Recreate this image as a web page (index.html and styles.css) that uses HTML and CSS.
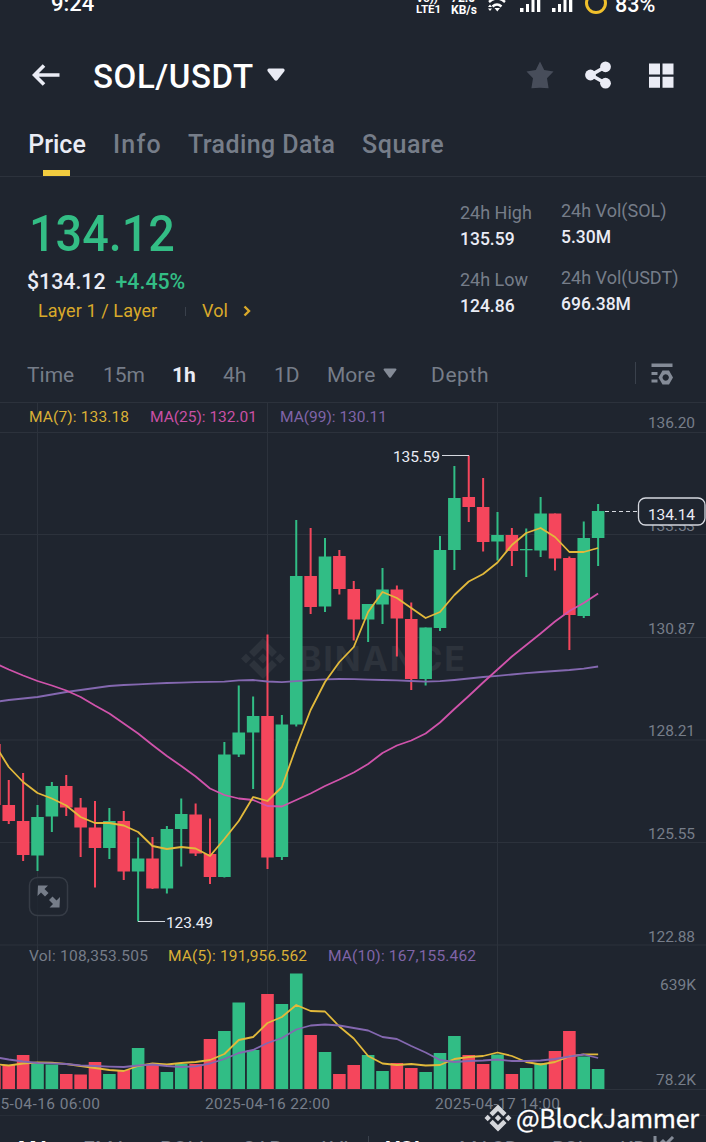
FILE: index.html
```html
<!DOCTYPE html>
<html lang="en">
  <head>
    <meta charset="utf-8">
    <title>SOL/USDT</title>
    <link rel="stylesheet" href="styles.css">
  </head>
  <body>
    <div class="status">
      <span class="clock">9:24</span>
      <span class="net vo"><b>Vo))</b><b>LTE1</b></span>
      <span class="net speed"><b>72.0</b><b>KB/s</b></span>
      <svg class="wifi" width="20" height="22" viewBox="0 0 20 22">
        <path d="M2 7Q10 0 18 7M5.500 11.500Q10 7.500 14.500 11.500" fill="none" stroke="#fff" stroke-width="2.4" />
        <path d="M7.5 13h5.500l-2.700 3.400zM3 9.500l2 2.500H1zM1 13.500h4l-2 2.500z" fill="#fff" />
      </svg>
      <svg class="signal" width="21" height="22" viewBox="0 0 21 22">
        <path d="M0 13h3.500v4H0zM6 9h3v8H6zM11.500 5h3v12h-3zM17 0h3.300v17H17z" fill="#fff" />
      </svg>
      <svg class="signal" width="21" height="22" viewBox="0 0 21 22">
        <path d="M0 13h3.500v4H0zM6 9h3v8H6zM11.500 5h3v12h-3zM17 0h3.300v17H17z" fill="#fff" />
      </svg>
      <span class="ring"></span>
      <span class="battery">83%</span>
    </div>

    <header>
      <svg class="back" width="28" height="22" viewBox="0 0 28 22">
        <path d="M12 1.500L2.500 11l9.500 9.500M3 11h24.500" fill="none" stroke="#eaecf5" stroke-width="3.600" />
      </svg>
      <h1>SOL/USDT</h1>
      <svg class="caret" width="18" height="14" viewBox="0 0 18 14">
        <path d="M2 0.500h14q2 0 1.500 2.500L10.500 12q-1.500 1.500-3 0L0.500 3Q0 0.500 2 0.500z" fill="#eaecf5" />
      </svg>
      <svg class="star" width="28" height="28" viewBox="0 0 28 28">
        <path d="M14 0.500l4.200 8.600 9.300 1.400-6.500 6.800 1.600 9.900-8.600-0.500-8.600 0.500L7 17.300 0.500 10.500l9.300-1.400z" fill="#474d5a" />
      </svg>
      <svg class="share" width="27" height="28" viewBox="0 0 27 28">
        <path d="M20.500 5.800L6 14l14.500 8.200" fill="none" stroke="#eaecf5" stroke-width="3.600" />
        <circle cx="20.500" cy="5.800" r="5.400" fill="#eaecf5" />
        <circle cx="5.500" cy="14" r="5.400" fill="#eaecf5" />
        <circle cx="20.500" cy="22.200" r="5.400" fill="#eaecf5" />
      </svg>
      <svg class="apps" width="25" height="25" viewBox="0 0 25 25">
        <path d="M0 0.500h11v11H0zM13.500 0.500h11v11h-11zM0 13.800h11v11H0zM13.500 13.800h11v11h-11z" fill="#eaecf5" />
      </svg>
    </header>

    <nav class="tabs">
      <span class="tab active">Price</span>
      <span class="tab info">Info</span>
      <span class="tab trading">Trading Data</span>
      <span class="tab square">Square</span>
    </nav>

    <section class="summary">
      <div class="left">
        <div class="price">134.12</div>
        <div class="fiat"><span>$134.12</span><span class="up">+4.45%</span></div>
        <div class="tags">
          <span class="layer">Layer 1 / Layer</span>
          <i></i>
          <span class="vol">Vol</span>
          <svg width="8" height="12" viewBox="0 0 8 12">
            <path d="M1.500 1.500L6 6l-4.500 4.500" fill="none" stroke="#d9a92a" stroke-width="2.400" />
          </svg>
        </div>
      </div>
      <div class="stats high">
        <label>24h High</label><strong>135.59</strong>
        <label>24h Low</label><strong>124.86</strong>
      </div>
      <div class="stats">
        <label>24h Vol(SOL)</label><strong>5.30M</strong>
        <label>24h Vol(USDT)</label><strong>696.38M</strong>
      </div>
    </section>

    <nav class="intervals">
      <span>Time</span>
      <span>15m</span>
      <span class="active">1h</span>
      <span>4h</span>
      <span>1D</span>
      <span class="more">More
        <svg width="14" height="11" viewBox="0 0 14 11">
          <path d="M1.500 0.500h11q1.500 0 0.800 1.500L8 9.300q-1 1-2 0L0.700 2Q0 0.500 1.500 0.500z" fill="#848b97" />
        </svg>
      </span>
      <span class="depth">Depth</span>
      <i></i>
      <svg class="settings" width="22" height="22" viewBox="0 0 22 22">
        <path d="M0.500 0.500h21v3.500h-21zM0.500 9h6v3h-6zM0.500 16.500h6v3h-6z" fill="#848b97" />
        <path d="M11.500 7.500h6.500l4 7-4 7h-6.500l-4-7zM14.700 11.300a3.200 3.200 0 1 0 0.010 0z" fill="#848b97" fill-rule="evenodd" />
      </svg>
    </nav>

    <svg id="chart" width="706" height="713" viewBox="0 402 706 713"></svg>

    <nav class="indicators">
      <span class="on">MA</span>
      <span>EMA</span>
      <span>BOLL</span>
      <span>SAR</span>
      <span>AVL</span>
      <i></i>
      <span class="on">VOL</span>
      <span>MACD</span>
      <span>RSI</span>
      <span>KDJ</span>
      <svg width="22" height="20" viewBox="0 0 22 20">
        <path d="M2 0v18h18M6 9l4-4 3 3 7-7" fill="none" stroke="#848b97" stroke-width="3" />
      </svg>
    </nav>

    <div class="credit">
      <svg width="28" height="28" viewBox="0 0 28 28">
        <path d="M14 0.500L22.500 9l-3.200 3.200L14 6.900l-5.300 5.300L5.500 9zM14 27.500L22.500 19l-3.200-3.200L14 21.100l-5.300-5.300L5.500 19zM14 10.800l3.200 3.200-3.200 3.200-3.200-3.200zM3.700 10.800L6.900 14l-3.200 3.200L0.500 14zM24.300 10.800l3.200 3.200-3.200 3.200-3.200-3.200z" />
      </svg>
      <span>@BlockJammer</span>
    </div>

    <script src="chart.js"></script>
  </body>
</html>
```
FILE: styles.css
```css
* {
  box-sizing: border-box;
}

body {
  margin: 0;
  width: 706px;
  height: 1142px;
  overflow: hidden;
  position: relative;
  background-color: #1f252f;
  color: #eaecf5;
  font-family: Roboto, "Liberation Sans", sans-serif;
}

svg {
  display: block;
  flex: none;
}

span {
  white-space: nowrap;
}

/* status bar */
.status {
  display: flex;
  height: 30px;
  padding-left: 51px;
  overflow: hidden;
  color: #fff;
}

.clock {
  width: 365px;
  margin-top: -9px;
  font-size: 22px;
  font-weight: 500;
  line-height: 26px;
}

.net {
  display: flex;
  flex-direction: column;
  font-size: 11.5px;
  line-height: 11px;
}

.net b {
  font-weight: 700;
}

.vo {
  width: 35px;
  margin-top: -7px;
}

.speed {
  width: 36px;
  margin-top: -8px;
  font-size: 12px;
  line-height: 12px;
}

.wifi {
  margin-top: -5px;
  margin-right: 13px;
}

.signal {
  margin-top: -5px;
  margin-right: 11px;
}

.ring {
  width: 22px;
  height: 22px;
  margin: -8px 0 0 1px;
  border: 3.500px solid #f0c02c;
  border-radius: 50%;
}

.battery {
  margin: -8px 0 0 8px;
  font-size: 21.500px;
  font-weight: 500;
  line-height: 26px;
}

/* header */
header {
  display: flex;
  align-items: center;
  height: 92px;
  padding-left: 32px;
}

h1 {
  width: 160px;
  margin: 2px 14px 0 33px;
  font-size: 33px;
  font-weight: 500;
  line-height: 40px;
  letter-spacing: 0.6px;
  color: #fff;
}

.back,
.star,
.share,
.apps {
  margin-top: -2px;
}

.caret {
  margin-top: -2px;
}

.star {
  margin-left: 241px;
  margin-right: 31px;
}

.share {
  margin-right: 37px;
}

/* tabs */
.tabs {
  display: flex;
  height: 55px;
  padding-left: 28px;
  border-bottom: 1px solid #2c323c;
  font-size: 25px;
  line-height: 30px;
  color: #767d89;
}

.tab {
  height: 55px;
  padding-top: 8px;
  font-weight: 500;
  letter-spacing: 0.4px;
}

.tab.active {
  display: flex;
  flex-direction: column;
  align-items: center;
  width: 58px;
  margin-right: 27px;
  letter-spacing: 0;
  color: #eaecf5;
}

.tab.active::after {
  content: "";
  width: 27px;
  height: 6px;
  margin: 10px 0 0 -1px;
  background-color: #f2cc3f;
}

.info {
  width: 75px;
  letter-spacing: 1.2px;
}

.trading {
  width: 174px;
}

.square {
  letter-spacing: 0.6px;
}

/* price summary */
.summary {
  display: flex;
  height: 171px;
  padding-left: 27px;
}

.left {
  width: 433px;
  padding-top: 29px;
}

.price {
  margin-left: 2px;
  font-size: 50px;
  font-weight: 500;
  line-height: 56px;
  color: #33bd85;
  transform: scaleX(0.935);
  transform-origin: left;
}

.fiat {
  display: flex;
  gap: 10px;
  margin-top: 7px;
  font-size: 21.300px;
  font-weight: 500;
  line-height: 26px;
}

.up {
  color: #33bd85;
}

.tags {
  display: flex;
  align-items: center;
  margin: 5px 0 0 11px;
  font-size: 18px;
  line-height: 22px;
  letter-spacing: 0.1px;
  color: #d9a92a;
}

.layer {
  width: 147px;
}

.tags i {
  width: 1px;
  height: 9px;
  margin-right: 16px;
  background-color: #39404b;
}

.vol {
  width: 41px;
}

.stats {
  display: flex;
  flex-direction: column;
  padding-top: 21px;
  font-size: 18px;
}

.stats.high {
  width: 101px;
  padding-top: 23px;
}

.stats label {
  line-height: 26px;
  color: #767d89;
}

.stats strong {
  height: 41px;
  font-size: 17.500px;
  font-weight: 500;
  line-height: 26px;
}

/* interval row */
.intervals {
  display: grid;
  grid-template-columns: 76px 69px 51px 51px 53px 104px 204px 16px 22px;
  align-items: center;
  height: 54px;
  padding: 0 0 1px 27px;
  font-size: 21px;
  line-height: 26px;
  color: #767d89;
}

.intervals .active {
  font-weight: 700;
  color: #eaecf5;
}

.more {
  display: flex;
  align-items: center;
  gap: 8px;
}

.more svg {
  margin-top: -3px;
}

.depth {
  letter-spacing: 0.6px;
}

.intervals i {
  width: 1px;
  height: 22px;
  margin-top: -3px;
  background-color: #3a414c;
}

.settings {
  margin-top: -2px;
}

/* chart */
#chart text {
  font-size: 15.500px;
  fill: #767d89;
}

#chart .watermark {
  font-family: Inter, sans-serif;
  font-size: 34px;
  font-weight: 700;
  fill: #2d333c;
}

#chart .bright {
  fill: #eaecf5;
}

#chart .ma7 {
  fill: #d9b036;
}

#chart .ma25 {
  fill: #c950a5;
}

#chart .ma99 {
  fill: #8064a8;
}

/* indicator row, cut by the bottom edge */
.indicators {
  display: grid;
  grid-template-columns: 65px 77px 83px 74px 51px 18px 73px 93px 68px 33px 22px;
  padding: 20px 0 0 18px;
  height: 50px;
  border-top: 1px solid #272d37;
  font-size: 21px;
  line-height: 27px;
  color: #767d89;
}

.indicators .on {
  font-weight: 700;
  color: #fff;
}

.indicators i {
  width: 1px;
  background-color: #3a414c;
}

.credit {
  position: absolute;
  left: 484px;
  top: 1100px;
  display: flex;
  align-items: center;
  gap: 4px;
  font-family: "Noto Sans CJK SC", "Noto Sans", sans-serif;
  font-size: 25px;
  line-height: 36px;
  color: #fff;
}

.credit span {
  margin-top: -1px;
  letter-spacing: -0.3px;
  -webkit-text-stroke: 0.3px #fff;
}

.credit svg {
  fill: #d4d6da;
}
```
FILE: chart.js
```javascript
const UP = "#31bd85";
const DOWN = "#f5465c";
const GRID = "#2c323c";
const STEP = 14.375;
const BASE = 1089;

// [direction, body top, body bottom, wick top, wick bottom, volume top]
const candles = [
  [-1, 744, 805, 744, 805, 1066],
  [-1, 805, 821, 780, 824, 1065],
  [-1, 821, 855, 773, 861, 1055],
  [1, 817, 855.5, 805, 871, 1063.5],
  [1, 786, 816.5, 782, 832, 1064.5],
  [-1, 786, 807.5, 775, 816, 1074],
  [-1, 807.5, 827.5, 798, 857, 1074.5],
  [-1, 827.5, 848, 801, 887.5, 1062],
  [1, 821, 848, 808, 859, 1074],
  [-1, 821, 871.5, 811, 880, 1070],
  [1, 858.5, 871.5, 837.5, 921.5, 1048],
  [-1, 858.5, 888.5, 837, 889, 1064],
  [1, 829, 888.5, 826, 893.5, 1072],
  [1, 814, 829, 798.5, 866.5, 1064],
  [-1, 814.5, 853.5, 803.5, 856, 1064],
  [-1, 854, 877, 818.5, 884, 1039],
  [1, 754.5, 877, 742, 877.5, 1031],
  [1, 732.5, 754.5, 685.5, 757, 1002.5],
  [1, 716, 732.5, 696.5, 789, 1050],
  [-1, 716, 857.5, 634.5, 869, 994],
  [1, 724.5, 857, 715, 860, 1004],
  [1, 576, 724.5, 520, 726.5, 973.5],
  [-1, 576, 607, 528, 614, 1035],
  [1, 556.5, 606.5, 538, 612, 1052],
  [-1, 556, 589, 550, 594.5, 1074],
  [-1, 589, 619.5, 581, 640.5, 1065],
  [1, 604, 619.5, 604, 642, 1055],
  [1, 589.5, 604.5, 568, 624, 1071],
  [-1, 589.5, 618.5, 585.5, 656.5, 1063],
  [-1, 619, 679, 602.5, 690, 1068],
  [1, 627.5, 679, 627.5, 685.5, 1072],
  [1, 550, 628, 536, 631, 1053],
  [1, 498, 550, 466, 570, 1036],
  [-1, 497, 507, 455.5, 522, 1055],
  [-1, 507, 542, 478, 551.5, 1064],
  [1, 535, 541.5, 512, 560.5, 1054.5],
  [-1, 535, 551, 528, 566, 1074],
  [1, 549, 550.3, 528.5, 577, 1068],
  [1, 513.5, 550.5, 497, 557, 1063],
  [-1, 513.5, 558.5, 513.5, 570.5, 1051],
  [-1, 558, 615, 556.5, 650, 1031],
  [1, 538, 616, 521.5, 618, 1056.5],
  [1, 511, 538, 504, 566, 1069]
];

const ma7 = [744, 767, 782, 793, 798.5, 805.5, 817, 823, 823, 825.5, 832, 846, 849, 847, 848.5, 856, 839, 821, 797, 801, 787, 747, 710, 682, 662, 647, 612, 592, 598, 608, 618, 612, 595, 581.5, 574, 562.5, 545, 533, 528, 537, 552, 552, 548];
const ma25 = [663, 669.5, 675.5, 681, 685.5, 690.5, 697, 705.5, 713.5, 723.5, 733.5, 745, 756, 766, 776.5, 788.5, 795, 798.5, 800, 806, 806.5, 800, 793.5, 786, 779.5, 772.5, 764, 753, 745.5, 740.5, 733.5, 722.5, 709, 696, 682.5, 669.5, 656.5, 645, 633.5, 621.5, 611, 603, 593.5];
const ma99 = [702, 700, 698.5, 697, 694.5, 692, 690, 688, 686, 685, 684.3, 683.6, 683, 682.6, 682.2, 681.8, 681.6, 680.4, 680, 681.5, 682.2, 681.2, 680.2, 679.3, 679, 679.2, 679.6, 680, 680.4, 681, 681.6, 681.2, 680, 678.5, 677, 675.8, 674.5, 673.2, 672, 671, 670, 668.6, 666.5];
const volMa5 = [1064, 1065.5, 1063.5, 1062.5, 1062.7, 1064, 1066, 1068, 1070, 1071, 1066, 1063.5, 1064.5, 1063, 1062, 1060, 1054, 1040, 1037, 1023, 1017, 1005, 1011, 1011.5, 1026.5, 1038.5, 1056, 1063.5, 1065, 1064, 1065.5, 1065, 1059, 1057, 1056, 1052.5, 1056, 1062, 1064.5, 1062, 1056.5, 1054.3, 1054.3];
const volMa10 = [1057, 1059.5, 1061.5, 1063, 1063.3, 1064, 1065.3, 1066, 1066.6, 1067, 1065.5, 1064.5, 1066, 1067, 1066.3, 1063.5, 1059, 1053, 1050, 1043, 1038, 1029.5, 1025.5, 1024.5, 1025.5, 1028, 1030.5, 1037, 1039, 1046, 1052.5, 1060, 1062, 1061, 1060.5, 1059.5, 1061, 1061, 1060.5, 1059, 1056.5, 1054.5, 1058];

const chart = document.getElementById("chart");

function add(name, attrs, text) {
  const el = document.createElementNS("http://www.w3.org/2000/svg", name);
  for (const key in attrs) el.setAttribute(key, attrs[key]);
  if (text) el.textContent = text;
  chart.appendChild(el);
}

function centerX(i) {
  return 8.75 + STEP * (i - 1);
}

function line(x1, y1, x2, y2, stroke, dash) {
  add("path", { d: `M${x1} ${y1}L${x2} ${y2}`, stroke: stroke, "stroke-dasharray": dash || "none" });
}

function label(x, y, width, text, cls) {
  add("text", { x: x, y: y, textLength: width, class: cls || "" }, text);
}

function average(values, stroke) {
  const points = values.map((y, i) => centerX(i) + "," + y).join(" ");
  add("polyline", { points: points, fill: "none", stroke: stroke, "stroke-width": 1.8, "stroke-linejoin": "round" });
}

// grid
[402.5, 432.5, 534.5, 637.5, 740, 842.5, 945, 1089.5].forEach((y) => line(0, y, 706, y, GRID));
[37.5, 267.5, 497.5].forEach((x) => line(x, 402, x, 1089, GRID));

// watermark
add("path", {
  d: "M263 638l14 14-5 5-9-9-9 9-5-5zM263 679l14-14-5-5-9 9-9-9-5 5zM263 653.500l5 5-5 5-5-5zM246 653.500l5 5-5 5-5-5zM280 653.500l5 5-5 5-5-5z",
  fill: "#2d333c"
});
label(299, 671, 166, "BINANCE", "watermark");

// price axis
label(648, 428, 47, "136.20");
label(648, 531, 47, "133.53");
label(648, 634, 47, "130.87");
label(648, 736, 47, "128.21");
label(648, 839, 47, "125.55");
label(648, 942, 47, "122.88");
label(660, 990, 36, "639K");
label(656, 1085, 40, "78.2K");

// candles and volume bars
candles.forEach(([dir, top, bottom, high, low, vol], i) => {
  const x = centerX(i);
  const color = dir > 0 ? UP : DOWN;
  add("rect", { x: x - 1, y: high, width: 2, height: low - high, fill: color });
  add("rect", { x: x - 6.3, y: top, width: 12.6, height: bottom - top, fill: color });
  add("rect", { x: x - 6.3, y: vol, width: 12.6, height: BASE - vol, fill: color });
});

average(ma99, "#8468b0");
average(ma25, "#d053ab");
average(ma7, "#e2b93b");
average(volMa5, "#e2b93b");
average(volMa10, "#8468b0");

// high and low marks
line(442, 455.5, 469, 455.5, "#d5d8df");
label(393, 462, 47, "135.59", "bright");
line(138, 921.5, 165, 921.5, "#d5d8df");
label(166, 928, 47, "123.49", "bright");

// last price
line(605, 511.5, 638, 511.5, "#d5d8df", "4 3");
add("rect", { x: 638.5, y: 498, width: 66.5, height: 27, rx: 7, fill: "#1f252f", stroke: "#d5d8df", "stroke-width": 1.3 });
label(648, 519.5, 47, "134.14", "bright");

// legends
label(29, 422, 100, "MA(7): 133.18", "ma7");
label(150, 422, 107, "MA(25): 132.01", "ma25");
label(280, 422, 107, "MA(99): 130.11", "ma99");
label(29, 961, 119, "Vol: 108,353.505");
label(168, 961, 139, "MA(5): 191,956.562", "ma7");
label(328, 961, 148, "MA(10): 167,155.462", "ma99");

// dates
label(-27, 1108.5, 127, "2025-04-16 06:00");
label(205, 1108.5, 125, "2025-04-16 22:00");
label(435, 1108.5, 125, "2025-04-17 14:00");

// expand button
add("rect", { x: 29.5, y: 877.5, width: 38, height: 38, rx: 8, fill: "#1f252f", "fill-opacity": 0.8, stroke: "#363c46", "stroke-width": 1.5 });
add("path", {
  d: "M38 885.500h10l-3.500 3.500 4 4-3.500 3.500-4-4-3.500 3.500zM59.500 907.500h-10l3.500-3.500-4-4 3.500-3.500 4 4 3.500-3.500z",
  fill: "#767d89"
});
```
